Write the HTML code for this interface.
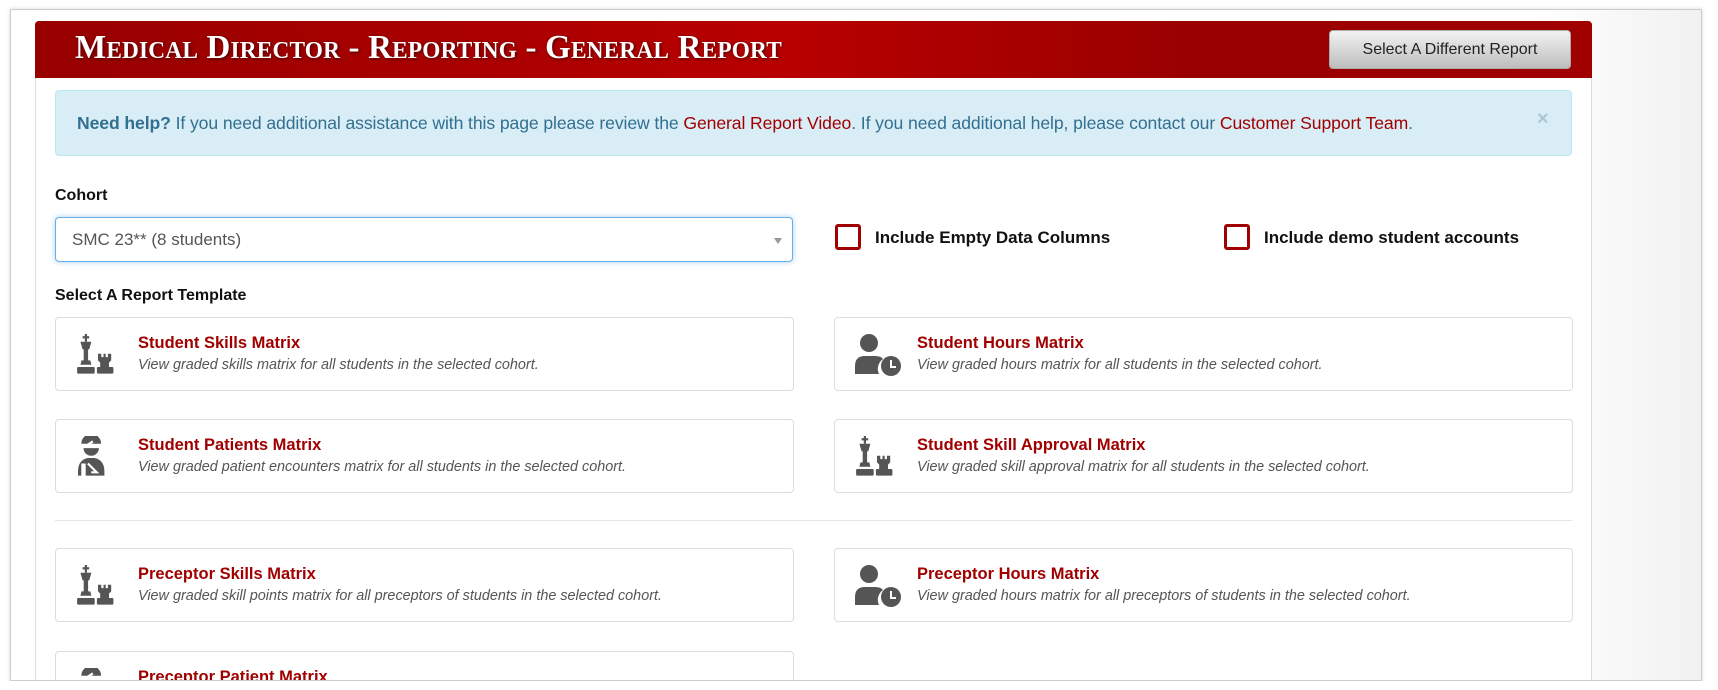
<!DOCTYPE html>
<html><head><meta charset="utf-8"><style>
*{box-sizing:border-box;margin:0;padding:0}
html,body{width:1718px;height:690px;overflow:hidden}
body{background:#fff;font-family:"Liberation Sans",sans-serif;position:relative}
.abs{position:absolute}
.clip{position:absolute;left:0;top:0;width:1718px;height:681px;overflow:hidden}
.panel{left:10px;top:9px;width:1692px;height:672px;border:1px solid #ccc;background:linear-gradient(90deg,#fff 90%,#f1f1f1);box-shadow:0 0 4px rgba(0,0,0,.15)}
.card{left:35px;top:21px;width:1557px;height:660px;background:#fff;border:1px solid #ddd;border-bottom:0;border-radius:4px 4px 0 0}
.hdr{left:35px;top:21px;width:1557px;height:57px;border-radius:4px 4px 0 0;background:linear-gradient(90deg,#980000 0%,#a80000 25%,#b80000 48%,#a80000 62%,#990000 75%,#a00000 100%)}
.title{left:75px;top:29px;color:#fff;font-family:"Liberation Serif",serif;font-weight:bold;font-variant:small-caps;font-size:34px;letter-spacing:0.2px;text-shadow:1px 1px 3px rgba(0,0,0,.6);white-space:nowrap;transform:scaleX(.97);transform-origin:0 0}
.btn{left:1329px;top:30px;width:242px;height:39px;border-radius:4px;background:linear-gradient(#f2f2f2,#bdbdbd);border:1px solid #aaa;font-size:16px;color:#222;text-align:center;line-height:37px}
.alert{left:55px;top:90px;width:1517px;height:66px;background:#d9edf7;border:1px solid #bce8f1;border-radius:4px;color:#31708f;font-size:17.6px;line-height:64px;padding-left:21px;white-space:nowrap;letter-spacing:-0.1px}
.alert a{color:#a00000}
.x{left:1537px;top:108px;color:#a9c7d6;font-size:20px;font-weight:bold}
.lbl{font-weight:bold;font-size:16px;color:#111}
.sel{left:55px;top:217px;width:738px;height:45px;border:1px solid #66afe9;border-radius:4px;box-shadow:0 0 6px rgba(102,175,233,.6);font-size:17px;color:#555;line-height:43px;padding-left:16px}
.sel:after{content:"";position:absolute;right:10px;top:20px;border:4px solid transparent;border-top:6px solid #999}
.cb{width:26px;height:26px;border:3px solid #a00000;border-radius:3px}
.box{width:739px;height:74px;border:1px solid #ddd;border-radius:4px;background:#fff}
.box .t{position:absolute;left:82px;top:15px;font-weight:bold;font-size:17px;color:#a00000;white-space:nowrap;transform:scaleX(.97);transform-origin:0 0}
.box .d{position:absolute;left:82px;top:38px;font-style:italic;font-size:15px;color:#555;white-space:nowrap;transform:scaleX(.96);transform-origin:0 0}
.box svg{position:absolute;left:20px;top:16px}
.hr{left:55px;top:520px;width:1517px;height:1px;background:#e5e5e5}
</style></head><body>
<svg width="0" height="0" style="position:absolute"><defs>
<g id="chess" fill="#555" transform="scale(1.1)"><rect x="8" y="0" width="2" height="7"/><rect x="6" y="2" width="6" height="2"/><path d="M4 7h10l-2 7h-1v10h2l1 4H4l1-4h2V14H6z"/><rect x="1" y="30" width="16" height="6" rx="1"/><path d="M20 18h3v3h2v-3h2v3h2v-3h3v6l-2 2v6h-8v-6l-2-2z"/><rect x="19" y="30" width="15" height="6" rx="1"/></g>
<g id="user" fill="#555"><circle cx="14" cy="9" r="9"/><path d="M0 40v-8q0-10 10-10h10q6 0 8 3a12 12 0 0 0-4 15z"/><circle cx="36" cy="32" r="10"/><path d="M35 26h2v6h4v2h-6z" fill="#fff"/></g>
<g id="inj" fill="#555" transform="scale(1.1)"><path d="M3 7a9 9 0 0 1 18 0z"/><path d="M5 11h14a7 7 0 0 1-14 0z"/><path d="M7 8l6-4 1 2-5 3z" fill="#fff"/><path d="M0 36v-4q0-10 9-12h6q9 2 9 12v4z"/><path d="M4 26v10h2V26zM9 25l8 8h-5" stroke="#fff" stroke-width="2" fill="none"/></g>
</defs></svg>
<div class="clip">
<div class="abs panel"></div>
<div class="abs card"></div>
<div class="abs hdr"></div>
<div class="abs title">Medical Director - Reporting - General Report</div>
<div class="abs btn">Select A Different Report</div>
<div class="abs alert"><b>Need help?</b> If you need additional assistance with this page please review the <a>General Report Video</a>. If you need additional help, please contact our <a>Customer Support Team</a>.</div>
<div class="abs x">×</div>
<div class="abs lbl" style="left:55px;top:187px">Cohort</div>
<div class="abs sel">SMC 23** (8 students)</div>
<div class="abs cb" style="left:835px;top:224px"></div>
<div class="abs lbl" style="left:875px;top:228px;font-size:17px">Include Empty Data Columns</div>
<div class="abs cb" style="left:1224px;top:224px"></div>
<div class="abs lbl" style="left:1264px;top:228px;font-size:17px">Include demo student accounts</div>
<div class="abs lbl" style="left:55px;top:287px">Select A Report Template</div>

<div class="abs box" style="left:55px;top:317px"><svg width="44" height="42"><use href="#chess"/></svg><div class="t">Student Skills Matrix</div><div class="d">View graded skills matrix for all students in the selected cohort.</div></div>
<div class="abs box" style="left:834px;top:317px"><svg width="48" height="44"><use href="#user"/></svg><div class="t">Student Hours Matrix</div><div class="d">View graded hours matrix for all students in the selected cohort.</div></div>
<div class="abs box" style="left:55px;top:419px"><svg width="44" height="42" style="left:22px"><use href="#inj"/></svg><div class="t">Student Patients Matrix</div><div class="d">View graded patient encounters matrix for all students in the selected cohort.</div></div>
<div class="abs box" style="left:834px;top:419px"><svg width="44" height="42"><use href="#chess"/></svg><div class="t">Student Skill Approval Matrix</div><div class="d">View graded skill approval matrix for all students in the selected cohort.</div></div>
<div class="abs hr"></div>
<div class="abs box" style="left:55px;top:548px"><svg width="44" height="42"><use href="#chess"/></svg><div class="t">Preceptor Skills Matrix</div><div class="d">View graded skill points matrix for all preceptors of students in the selected cohort.</div></div>
<div class="abs box" style="left:834px;top:548px"><svg width="48" height="44"><use href="#user"/></svg><div class="t">Preceptor Hours Matrix</div><div class="d">View graded hours matrix for all preceptors of students in the selected cohort.</div></div>
<div class="abs box" style="left:55px;top:651px;height:30px;border-bottom:0;border-radius:4px 4px 0 0;overflow:hidden"><svg width="44" height="42" style="left:22px"><use href="#inj"/></svg><div class="t">Preceptor Patient Matrix</div></div>
<div class="abs" style="left:10px;top:680px;width:1692px;height:1px;background:#ccc"></div>
</div>
</body></html>
